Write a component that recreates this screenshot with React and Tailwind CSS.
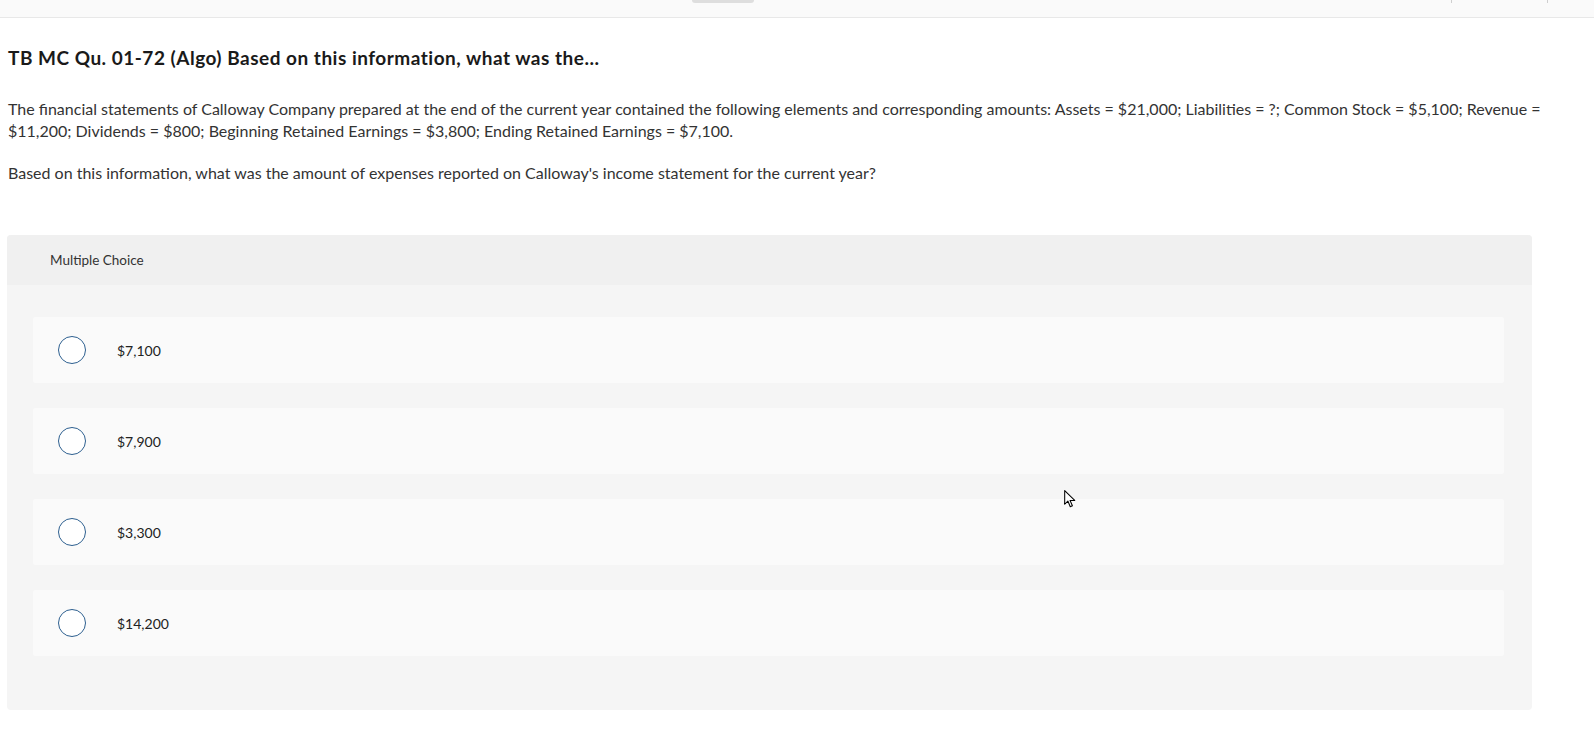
const choices = ["$7,100", "$7,900", "$3,300", "$14,200"];

function ChoiceRow({ label }) {
  return (
    <div className="flex items-center h-[66px] bg-[#fafafa] rounded-[2px] pl-[25px]">
      <span className="w-[28px] h-[28px] rounded-full border-[1.5px] border-[#2d5f8f] bg-white shrink-0" />
      <span className="ml-[31px] text-[14px] text-[#222]">{label}</span>
    </div>
  );
}

export default function App() {
  return (
    <div className="relative min-h-[736px] bg-white font-['Lato',sans-serif] text-[#333]">
      {/* top bar */}
      <div className="relative h-[18px] bg-[#fafafa] border-b border-[#e8e8e8]">
        <div className="absolute left-[692px] top-0 w-[62px] h-[3px] bg-[#dedede] rounded-b-md" />
        <div className="absolute left-[1451px] top-0 w-px h-[3px] bg-[#cfcfcf]" />
        <div className="absolute left-[1547px] top-0 w-px h-[3px] bg-[#cfcfcf]" />
      </div>

      <div className="pl-[7px]">
        <h1 className="ml-px mt-[28px] text-[19px] leading-[24px] font-bold tracking-[0.5px] text-[#1a1a1a]">
          TB MC Qu. 01-72 (Algo) Based on this information, what was the...
        </h1>

        <p className="ml-px mt-[28px] w-[1540px] text-[16px] leading-[22px]">
          The financial statements of Calloway Company prepared at the end of the current year contained the following elements and corresponding amounts: Assets = $21,000; Liabilities = ?; Common Stock = $5,100; Revenue = $11,200; Dividends = $800; Beginning Retained Earnings = $3,800; Ending Retained Earnings = $7,100.
        </p>
        <p className="ml-px mt-[20px] text-[16px] leading-[22px]">
          Based on this information, what was the amount of expenses reported on Calloway's income statement for the current year?
        </p>

        <div className="mt-[51px] w-[1525px] rounded-[4px] overflow-hidden bg-[#f5f5f5]">
          <div className="h-[50px] flex items-center pl-[43px] bg-[#f0f0f0] text-[13.5px] text-[#333]">
            Multiple Choice
          </div>
          <div className="pl-[26px] pr-[28px] pt-[32px] pb-[54px] flex flex-col gap-[25px]">
            {choices.map((c) => (
              <ChoiceRow key={c} label={c} />
            ))}
          </div>
        </div>
      </div>

      {/* mouse pointer */}
      <svg className="absolute left-[1064px] top-[490px]" width="13" height="19" viewBox="0 0 12 18">
        <path d="M0.5 0.5 L0.5 13.5 L3.5 10.5 L5.8 15.8 L7.8 15 L5.6 9.9 L10 9.9 Z" fill="white" stroke="black" strokeWidth="1" strokeLinejoin="round" />
      </svg>
    </div>
  );
}
